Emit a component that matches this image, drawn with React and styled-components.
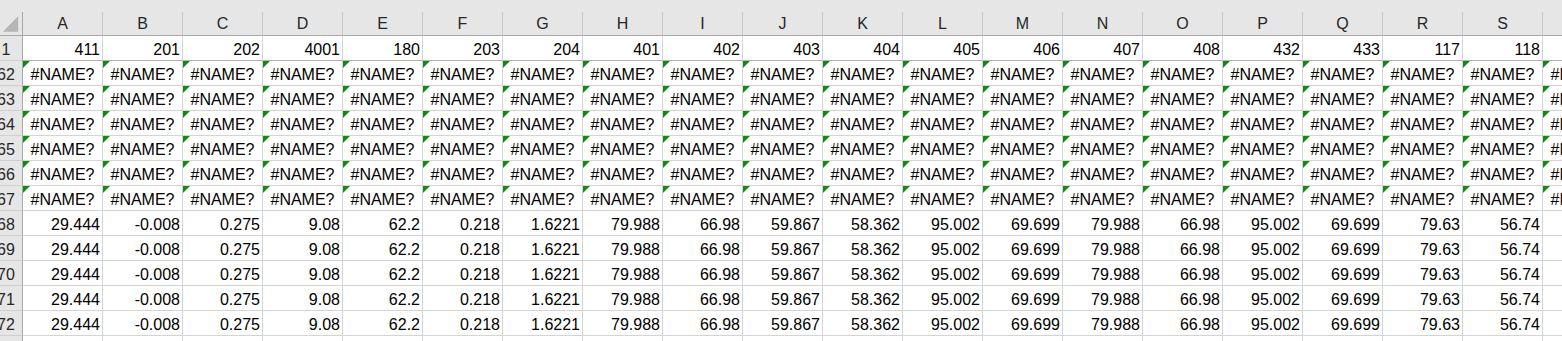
import React from "react";
import styled, { createGlobalStyle, css } from "styled-components";

const GlobalStyle = createGlobalStyle`
  html, body {
    margin: 0;
    padding: 0;
    background: #ffffff;
    overflow: hidden;
  }
  body {
    font-family: "Liberation Sans", Arial, sans-serif;
    font-size: 16px;
  }
`;

const columns = "ABCDEFGHIJKLMNOPQRST".split("");

const idRow = [
  "411", "201", "202", "4001", "180", "203", "204", "401", "402", "403",
  "404", "405", "406", "407", "408", "432", "433", "117", "118", "119",
];

const valueRow = [
  "29.444", "-0.008", "0.275", "9.08", "62.2", "0.218", "1.6221", "79.988",
  "66.98", "59.867", "58.362", "95.002", "69.699", "79.988", "66.98",
  "95.002", "69.699", "79.63", "56.74", "12.4536",
];

// rows 62-67 are broken formulas, 68-72 hold plain values
const rows = [];
for (let n = 62; n <= 73; n++) {
  if (n <= 67) rows.push({ n, kind: "error" });
  else if (n <= 72) rows.push({ n, kind: "value" });
  else rows.push({ n, kind: "blank" });
}

function App() {
  return (
    <>
      <GlobalStyle />
      <Window>
        <Sheet>
          <Corner>
            <svg width="23" height="23" viewBox="0 0 23 23">
              <polygon points="3,20 19,4 19,20" fill="#b5b5b5" />
            </svg>
          </Corner>
          {columns.map((c) => (
            <ColHeader key={c}>{c}</ColHeader>
          ))}

          <RowHeader>1</RowHeader>
          {idRow.map((v, i) => (
            <Cell key={"id" + i} $frozen>
              {v}
            </Cell>
          ))}

          {rows.map((row) => (
            <React.Fragment key={row.n}>
              <RowHeader>{row.n}</RowHeader>
              {columns.map((c, i) => {
                if (row.kind === "error")
                  return (
                    <Cell key={c} $error>
                      #NAME?
                    </Cell>
                  );
                if (row.kind === "value") return <Cell key={c}>{valueRow[i]}</Cell>;
                return <Cell key={c} />;
              })}
            </React.Fragment>
          ))}
        </Sheet>
      </Window>
    </>
  );
}

export default App;

const Window = styled.div`
  width: 1562px;
  height: 341px;
  overflow: hidden;
  padding-top: 12px;
  box-sizing: border-box;
  background: #e6e6e6;
`;

const Sheet = styled.div`
  display: grid;
  grid-template-columns: 23px repeat(20, 80px);
  grid-template-rows: 24px repeat(13, 25px);
  width: max-content;
`;

const Corner = styled.div`
  box-sizing: border-box;
  background: #e6e6e6;
  border-right: 1px solid #a8a8a8;
  border-bottom: 1px solid #a8a8a8;
  display: flex;
  align-items: flex-start;
`;

const ColHeader = styled.div`
  box-sizing: border-box;
  background: #e6e6e6;
  border-right: 1px solid #c9c9c9;
  border-bottom: 1px solid #a8a8a8;
  display: flex;
  align-items: center;
  justify-content: center;
  line-height: 23px;
  color: #262626;
`;

const RowHeader = styled.div`
  box-sizing: border-box;
  background: #e6e6e6;
  border-right: 1px solid #a8a8a8;
  border-bottom: 1px solid #cfcfcf;
  display: flex;
  align-items: flex-end;
  justify-content: center;
  padding-right: 10px;
  line-height: 20px;
  color: #262626;
  overflow: hidden;
  white-space: nowrap;
`;

const Cell = styled.div`
  position: relative;
  box-sizing: border-box;
  background: #ffffff;
  border-right: 1px solid #d4d4d4;
  border-bottom: 1px solid ${(p) => (p.$frozen ? "#b4b4b4" : "#d4d4d4")};
  display: flex;
  align-items: flex-end;
  justify-content: ${(p) => (p.$error ? "center" : "flex-end")};
  padding: 0 2px;
  line-height: 20px;
  color: #000000;
  white-space: nowrap;
  overflow: hidden;

  ${(p) =>
    p.$error &&
    css`
      &::before {
        content: "";
        position: absolute;
        top: 0;
        left: 0;
        border-top: 7px solid #138a13;
        border-right: 7px solid transparent;
      }
    `}
`;
